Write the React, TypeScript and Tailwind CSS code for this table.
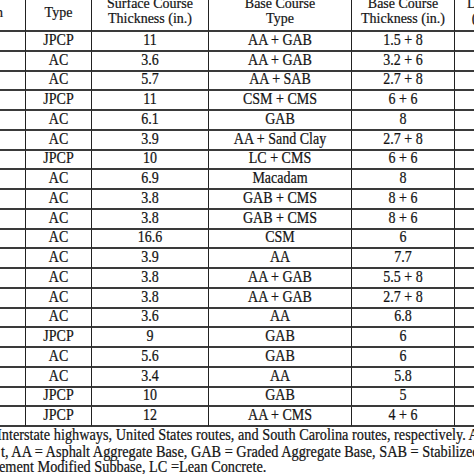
const rows: [string, string, string, string][] = [
  ["JPCP", "11", "AA + GAB", "1.5 + 8"],
  ["AC", "3.6", "AA + GAB", "3.2 + 6"],
  ["AC", "5.7", "AA + SAB", "2.7 + 8"],
  ["JPCP", "11", "CSM + CMS", "6 + 6"],
  ["AC", "6.1", "GAB", "8"],
  ["AC", "3.9", "AA + Sand Clay", "2.7 + 8"],
  ["JPCP", "10", "LC + CMS", "6 + 6"],
  ["AC", "6.9", "Macadam", "8"],
  ["AC", "3.8", "GAB + CMS", "8 + 6"],
  ["AC", "3.8", "GAB + CMS", "8 + 6"],
  ["AC", "16.6", "CSM", "6"],
  ["AC", "3.9", "AA", "7.7"],
  ["AC", "3.8", "AA + GAB", "5.5 + 8"],
  ["AC", "3.8", "AA + GAB", "2.7 + 8"],
  ["AC", "3.6", "AA", "6.8"],
  ["JPCP", "9", "GAB", "6"],
  ["AC", "5.6", "GAB", "6"],
  ["AC", "3.4", "AA", "5.8"],
  ["JPCP", "10", "GAB", "5"],
  ["JPCP", "12", "AA + CMS", "4 + 6"],
];

function HeadCell({
  lines,
  last = false,
  className = "text-center",
}: {
  lines: string[];
  last?: boolean;
  className?: string;
}) {
  return (
    <th
      className={`h-[37px] border-b-2 border-b-[#3a3a3a] p-0 align-middle font-normal ${className} ${last ? "" : "border-r border-r-[#222]"}`}
    >
      <span className="inline-block scale-y-[1.1] leading-[13.7px]">
        {lines.map((l) => (
          <span key={l} className="block whitespace-nowrap">
            {l}
          </span>
        ))}
      </span>
    </th>
  );
}

export default function App() {
  return (
    <div className="h-[474px] w-[474px] overflow-hidden bg-white font-['Liberation_Serif','Times_New_Roman',serif] text-[14px] text-[#141414] [-webkit-text-stroke:0.2px_#141414]">
      <div className="-mt-[5px] -ml-[62px]">
        <table className="w-[590px] table-fixed border-separate border-spacing-0">
          <colgroup>
            <col className="w-[88px]" />
            <col className="w-[66px]" />
            <col className="w-[117px]" />
            <col className="w-[143px]" />
            <col className="w-[103px]" />
            <col className="w-[73px]" />
          </colgroup>
          <thead>
            <tr>
              <HeadCell lines={["Section"]} className="pr-[22px] text-right" />
              <HeadCell lines={["Type"]} />
              <HeadCell lines={["Surface Course", "Thickness (in.)"]} />
              <HeadCell lines={["Base Course", "Type"]} />
              <HeadCell lines={["Base Course", "Thickness (in.)"]} />
              <HeadCell lines={["Distance", "(miles)"]} last />
            </tr>
          </thead>
          <tbody>
            {rows.map((r, i) => (
              <tr key={i}>
                <td className="h-[19.75px] border-r border-b-2 border-r-[#222] border-b-[#3a3a3a] p-0" />
                {r.map((c, j) => (
                  <td
                    key={j}
                    className="h-[19.75px] whitespace-nowrap border-r border-b-2 border-r-[#222] border-b-[#3a3a3a] p-0 pb-[2px] text-center align-middle leading-[14px]"
                  >
                    <span className="inline-block scale-y-[1.17]">{c}</span>
                  </td>
                ))}
                <td className="h-[19.75px] border-b-2 border-b-[#3a3a3a] p-0" />
              </tr>
            ))}
          </tbody>
        </table>
      </div>
      <div className="origin-top scale-y-[1.1] whitespace-nowrap text-[14.3px] leading-[14.6px]">
        <div className="-ml-[3px]">
          Interstate highways, United States routes, and South Carolina routes, respectively. AC = Asphalt Concrete,
        </div>
        <div className="ml-[1px]">
          t, AA = Asphalt Aggregate Base, GAB = Graded Aggregate Base, SAB = Stabilized Aggregate Base,
        </div>
        <div className="-ml-[1px]">ement Modified Subbase, LC =Lean Concrete.</div>
      </div>
    </div>
  );
}
